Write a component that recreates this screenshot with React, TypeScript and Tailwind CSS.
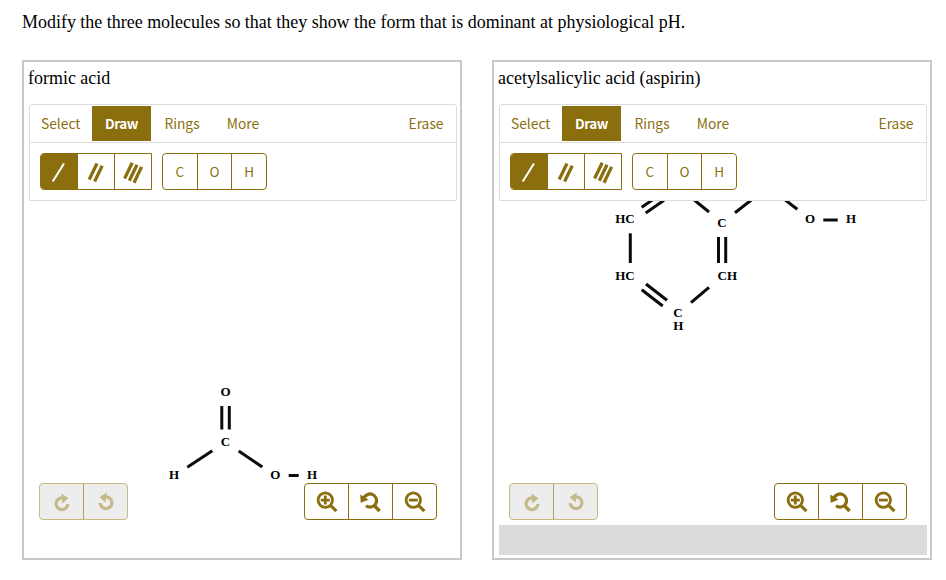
import React from 'react';

type Bond = [number, number, number, number];
type Atom = [string, number, number];

interface Molecule {
  title: string;
  viewBox: string;
  footer: boolean;
  bonds: Bond[];
  atoms: Atom[];
}

const molecules: Molecule[] = [
  {
    title: 'formic acid',
    viewBox: '29 201 428 282',
    footer: false,
    bonds: [
      [221.8, 406, 221.8, 429.5],
      [229.3, 406, 229.3, 429.5],
      [212.3, 450.8, 187.3, 467.2],
      [238.7, 451, 262.3, 467],
      [288.7, 475.5, 298.7, 475.5],
    ],
    atoms: [['O', 225.5, 396], ['C', 225.5, 446], ['H', 174, 479], ['O', 275.3, 479], ['H', 312, 479]],
  },
  {
    title: 'acetylsalicylic acid (aspirin)',
    viewBox: '499 201 428 282',
    footer: true,
    bonds: [
      [641.7, 207.3, 653, 199.5],
      [645.7, 213, 664, 200.3],
      [694.3, 200, 709, 212],
      [735, 212.7, 751.3, 200],
      [785.3, 200, 797.3, 209.3],
      [823.3, 220, 837.7, 220],
      [630.3, 233.3, 630.3, 263],
      [718.5, 237, 718.5, 263],
      [725.7, 237, 725.7, 263],
      [646, 284, 667, 300.3],
      [641.7, 289.7, 662.7, 306],
      [691, 302.7, 709, 287.3],
    ],
    atoms: [
      ['HC', 625, 223],
      ['C', 722, 226.7],
      ['O', 810, 223],
      ['H', 851, 223],
      ['HC', 625, 280],
      ['CH', 727.3, 280],
      ['C', 678, 317],
      ['H', 678.3, 330],
    ],
  },
];

function Toolbar() {
  return (
    <div className="h-[97px] rounded-t-[3px] border border-[#dcdcdc] text-[#8b6f0e]">
      <div className="flex h-[38px] items-center border-b border-[#dcdcdc] text-[13.8px] leading-[20px]">
        <span className="w-[62px] pb-[2px] pl-[11px]">Select</span>
        <span className="flex h-[35px] w-[59px] items-center justify-center bg-[#8b6f0e] pb-[2px] text-[13.5px] font-bold tracking-[-0.4px] text-white">Draw</span>
        <span className="w-[62px] pb-[2px] text-center">Rings</span>
        <span className="w-[60px] pb-[2px] text-center">More</span>
        <span className="mr-[12.5px] ml-auto pb-[2px]">Erase</span>
      </div>
      <div className="flex gap-[10px] pt-[10px] pl-[10px] text-[13.5px]">
        <div className="flex h-[37px] w-[112px] overflow-hidden rounded-l-[4px] border border-[#8b6f0e]">
          <svg width="110" height="35" viewBox="41 154 110 35" fill="none" stroke="#8b6f0e" strokeWidth="3.3">
            <path d="M41 154h37v35H41z" fill="#8b6f0e" stroke="none" />
            <path d="M52.7 181.5L64 163.5" stroke="white" strokeWidth="2" />
            <path d="M89.2 179.5L97 163.5M94.6 181.5L102.2 165.7" />
            <path d="M124.6 178.5L132.2 162.8M129.3 180.7L137 164.7M134 182.7L141.6 166.9" />
            <path d="M114.5 154v35" strokeWidth="1" />
          </svg>
        </div>
        <div className="flex h-[37px] w-[105px] items-stretch divide-x divide-[#8b6f0e] rounded-[4px] border border-[#8b6f0e]">
          {['C', 'O', 'H'].map((el) => (
            <span key={el} className="flex flex-1 items-center justify-center">{el}</span>
          ))}
        </div>
      </div>
    </div>
  );
}

function HistoryButtons() {
  return (
    <div className="h-[37px] w-[89px] rounded-[4px] border border-[#c6bc82] bg-[#ededed]">
      <svg width="87" height="35" viewBox="40 484 87 35" fill="none" stroke="#c5ba8b" strokeWidth="3.3">
        <path d="M83.5 484v35" stroke="#b29f5e" strokeWidth="1" />
        <path d="M62.5 497.8A5.9 5.9 0 1 0 67.9 504" />
        <path d="M61.3 493.5L68.5 498.2L62.3 503.4z" fill="#c5ba8b" stroke="none" />
        <path d="M105.5 496.8A5.9 5.9 0 1 1 100.1 503" />
        <path d="M106.7 492.5L99.5 497.2L105.7 502.4z" fill="#c5ba8b" stroke="none" />
      </svg>
    </div>
  );
}

function ZoomButtons() {
  return (
    <div className="h-[37px] w-[133px] rounded-[4px] border border-[#8b6f0e]">
      <svg width="131" height="35" viewBox="305 484 131 35" fill="none" stroke="#8b6f0e" strokeWidth="2.8">
        <path d="M348.5 484v35M392.5 484v35" strokeWidth="1" />
        <circle cx="325.3" cy="500.1" r="7.2" />
        <path d="M320.8 500.1h9M325.3 495.6v9" />
        <path d="M330.5 505.3L336.4 511.2" strokeWidth="3.2" />
        <path d="M363.8 498.2A6.6 6.6 0 1 1 366 505.8" strokeWidth="3.2" />
        <path d="M360.2 494.6L360.7 502.8L368.6 499.8z" fill="#8b6f0e" stroke="none" />
        <path d="M374 505.3L379.6 511" strokeWidth="3.4" />
        <circle cx="413.3" cy="500.1" r="7.2" />
        <path d="M408.8 500.1h9" />
        <path d="M418.5 505.3L424.4 511.2" strokeWidth="3.2" />
      </svg>
    </div>
  );
}

function Editor({ molecule }: { molecule: Molecule }) {
  return (
    <section className="flex h-[500px] w-[440px] flex-col border-2 border-[#c8c8c8] pr-[3px] pl-[5px]">
      <h2 className="-ml-px h-[42px] pt-[5px] font-['Liberation_Serif',serif] text-[17.97px] leading-[22px] text-black">
        {molecule.title}
      </h2>
      <Toolbar />
      <svg width="428" height="282" viewBox={molecule.viewBox} className="block shrink-0">
        {molecule.bonds.map(([x1, y1, x2, y2], i) => (
          <line key={i} x1={x1} y1={y1} x2={x2} y2={y2} stroke="#0b0b0b" strokeWidth="3" />
        ))}
        {molecule.atoms.map(([label, x, y], i) => (
          <text key={i} x={x} y={y} textAnchor="middle" className="fill-black font-['Liberation_Serif',serif] text-[13px] font-bold">
            {label}
          </text>
        ))}
      </svg>
      <div className="flex shrink-0 justify-between pr-[20px] pl-[10px]">
        <HistoryButtons />
        <ZoomButtons />
      </div>
      {molecule.footer && <div className="mt-[5px] h-[30px] w-[428px] shrink-0 bg-[#dbdbdb]" />}
    </section>
  );
}

export default function App() {
  return (
    <div className="h-[580px] w-[946px] overflow-hidden bg-white pl-[22px] font-['Noto_Sans_CJK_SC',sans-serif]">
      <p className="h-[60px] pt-[11px] font-['Liberation_Serif',serif] text-[17.97px] leading-[22px] whitespace-nowrap text-black">
        Modify the three molecules so that they show the form that is dominant at physiological pH.
      </p>
      <div className="flex gap-[30px]">
        {molecules.map((m) => (
          <Editor key={m.title} molecule={m} />
        ))}
      </div>
    </div>
  );
}
